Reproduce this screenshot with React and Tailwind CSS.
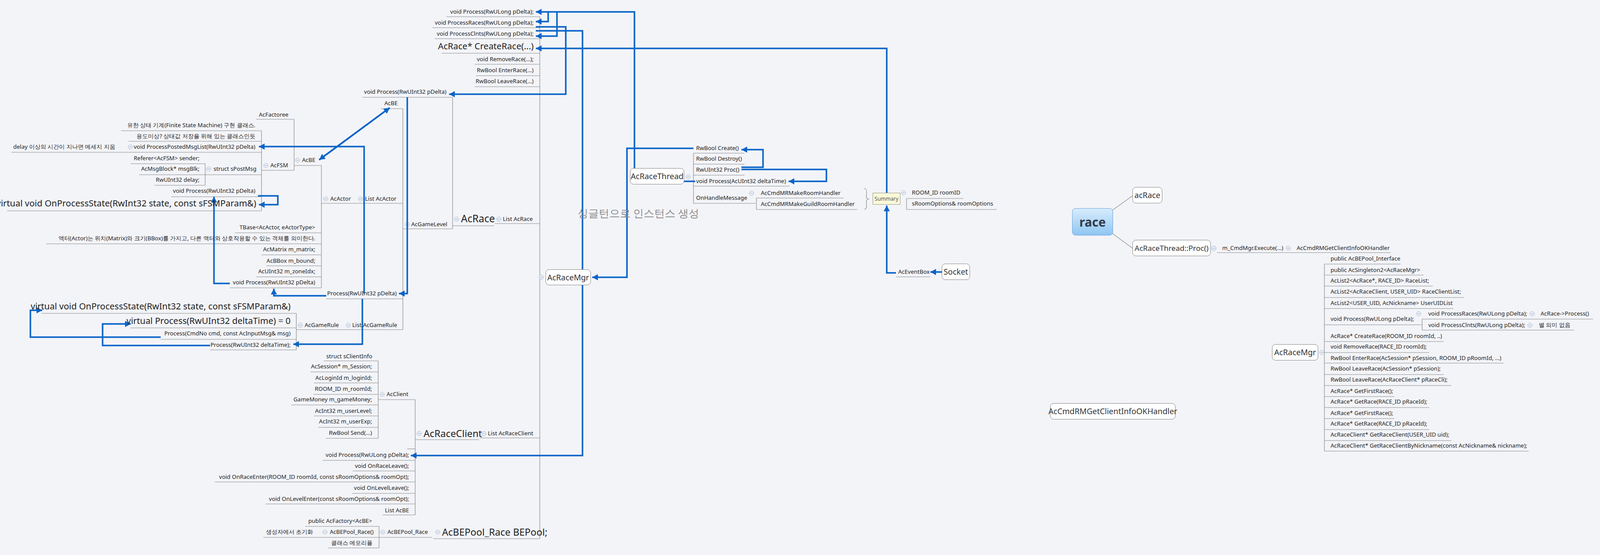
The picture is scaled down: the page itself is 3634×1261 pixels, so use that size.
import React from "react";

const S = 13, L = 20;
// [anchor, x, y(center), text, size, ulY, ulX1, ulX2, minusX]
const items = [
  ["r",1014,209,"void Process(RwUInt32 pDelta)",S,221,823,1028],
  ["l",873,235,"AcBE",S,247,865,915],
  ["l",588,261,"AcFactoree",S,271,582,668],
  ["r",580,285,"유한 상태 기계(Finite State Machine) 구현 클래스.",S,297,275,594],
  ["r",580,310,"용도미상? 상태값 저장을 위해 있는 클래스인듯",S,321,292,594],
  ["l",30,334,"delay 이상의 시간이 지나면 메세지 지움",S,346,26,594],
  ["r",580,334,"void ProcessPostedMsgList(RwUInt32 pDelta)",S,null,0,0,296],
  ["r",453,360,"Referer<AcFSM> sender;",S,372,297,466],
  ["r",453,384,"AcMsgBlock* msgBlk;",S,397,316,594],
  ["l",485,384,"struct sPostMsg",S,null,0,0,474],
  ["r",453,409,"RwUInt32 delay;",S,421,351,466],
  ["r",580,434,"void Process(RwUInt32 pDelta)",S,447,389,594],
  ["r",582,463,"virtual void OnProcessState(RwInt32 state, const sFSMParam&)",L,479,16,594],
  ["l",614,376,"AcFSM",S,387,594,668,604],
  ["l",686,364,"AcBE",S,376,668,730,676],
  ["l",750,452,"AcActor",S,462,730,805,740],
  ["l",829,452,"List AcActor",S,462,805,915,819],
  ["r",716,517,"TBase<AcActor, eActorType>",S,529,534,730],
  ["r",716,542,"액터(Actor)는 위치(Matrix)와 크기(BBox)를 가지고, 다른 액터와 상호작용할 수 있는 객체를 의미한다.",S,554,105,730],
  ["r",716,567,"AcMatrix m_matrix;",S,579,594,730],
  ["r",716,593,"AcBBox m_bound;",S,604,605,730],
  ["r",716,617,"AcUInt32 m_zoneIdx;",S,629,582,730],
  ["r",716,642,"void Process(RwUInt32 pDelta)",S,654,522,730],
  ["r",901,667,"Process(RwUInt32 pDelta)",S,679,741,915],
  ["l",934,510,"AcGameLevel",S,520,915,1028,925],
  ["l",1047,498,"AcRace",L+3,513,1028,1122,1037],
  ["l",1142,498,"List AcRace",S,508,1124,1226,1133],
  ["r",660,697,"virtual void OnProcessState(RwInt32 state, const sFSMParam&)",L,712,94,673],
  ["r",660,730,"virtual Process(RwUInt32 deltaTime) = 0",L,745,296,673],
  ["l",692,739,"AcGameRule",S,749,673,790,682],
  ["l",800,739,"List AcGameRule",S,749,790,915,791],
  ["r",660,758,"Process(CmdNo cmd, const AcInputMsg& msg)",S,771,365,673],
  ["r",660,784,"Process(RwUInt32 deltaTime);",S,795,477,673],
  ["l",741,810,"struct sClientInfo",S,820,735,859],
  ["r",845,833,"AcSession* m_Session;",S,845,705,859],
  ["r",845,859,"AcLoginId m_loginId;",S,870,713,859],
  ["r",845,884,"ROOM_ID m_roomId;",S,896,712,859],
  ["r",845,908,"GameMoney m_gameMoney;",S,920,662,859],
  ["r",845,934,"AcInt32 m_userLevel;",S,945,713,859],
  ["r",845,958,"AcInt32 m_userExp;",S,971,723,859],
  ["r",845,984,"RwBool Send(...)",S,996,740,859],
  ["l",878,896,"AcClient",S,908,859,943,868],
  ["l",962,985,"AcRaceClient",L+2,999,943,1088,952],
  ["l",1108,985,"List AcRaceClient",S,995,1090,1226,1099],
  ["r",929,1034,"void Process(RwULong pDelta);",S,1046,733,943],
  ["r",929,1059,"void OnRaceLeave();",S,1070,801,943],
  ["r",929,1084,"void OnRaceEnter(ROOM_ID roomId, const sRoomOptions& roomOpt);",S,1095,488,943],
  ["r",929,1109,"void OnLevelLeave();",S,1121,800,943],
  ["r",929,1134,"void OnLevelEnter(const sRoomOptions& roomOpt);",S,1145,603,943],
  ["r",929,1160,"List AcBE",S,1170,869,943],
  ["r",845,1184,"public AcFactory<AcBE>",S,1196,693,861],
  ["l",604,1209,"생성자에서 초기화",S,1221,598,861],
  ["l",749,1209,"AcBEPool_Race()",S,null,0,0,738],
  ["r",846,1234,"클래스 메모리풀",S,1245,745,861],
  ["l",880,1209,"AcBEPool_Race",S,1221,861,982,869],
  ["l",1004,1209,"AcBEPool_Race BEPool;",L+2,1224,984,1226,994],
  ["r",1212,27,"void Process(RwULong pDelta);",S,38,1014,1226],
  ["r",1212,52,"void ProcessRaces(RwULong pDelta);",S,63,982,1226],
  ["r",1212,77,"void ProcessClnts(RwULong pDelta);",S,88,987,1226],
  ["r",1212,106,"AcRace* CreateRace(...)",L,121,1003,1226],
  ["r",1212,135,"void RemoveRace(...);",S,146,1078,1226],
  ["r",1212,160,"RwBool EnterRace(...)",S,172,1081,1226],
  ["r",1212,185,"RwBool LeaveRace(...)",S,197,1078,1226],
  ["l",1581,337,"RwBool Create()",S,348,1575,1691],
  ["l",1581,361,"RwBool Destroy()",S,373,1575,1691],
  ["l",1581,386,"RwUInt32 Proc()",S,398,1575,1691],
  ["l",1581,412,"void Process(AcUInt32 deltaTime)",S,423,1575,1793],
  ["l",1581,450,"OnHandleMessage",S,462,1575,1716],
  ["l",1728,439,"AcCmdMRMakeRoomHandler",S,450,1718,1916,1707],
  ["l",1728,464,"AcCmdMRMakeGuildRoomHandler",S,476,1718,1947],
  ["l",2071,438,"ROOM_ID roomID",S,451,2059,2188,2052],
  ["l",2071,463,"sRoomOptions& roomOptions",S,476,2059,2264],
  ["l",2040,618,"AcEventBox",S,629,2035,2113],
  ["l",2776,564,"m_CmdMgr.Execute(...)",S,574,2764,3159,2757],
  ["l",2945,564,"AcCmdRMGetClientInfoOKHandler",S,null,0,0,2926],
  ["l",3244,713,"void ProcessRaces(RwULong pDelta);",S,725,3230,3618,3222],
  ["l",3499,713,"AcRace->Process()",S,null,0,0,3480],
  ["l",3244,739,"void ProcessClnts(RwULong pDelta);",S,750,3230,3575],
  ["l",3495,739,"별 의미 없음",S,null,0,0,3475],
];
const mgr = [
  ["public AcBEPool_Interface",588,600,3181],
  ["public AcSingleton2<AcRaceMgr>",614,625,3233],
  ["AcList2<AcRace*, RACE_ID> RaceList;",638,650,3254],
  ["AcList2<AcRaceClient, USER_UID> RaceClientList;",663,676,3325],
  ["AcList2<USER_UID, AcNickname> UserUIDList",689,701,3301],
  ["void Process(RwULong pDelta);",725,738,3230],
  ["AcRace* CreateRace(ROOM_ID roomId, ..)",764,776,3279],
  ["void RemoveRace(RACE_ID roomId);",788,801,3246],
  ["RwBool  EnterRace(AcSession* pSession, ROOM_ID pRoomId, ...)",814,825,3415],
  ["RwBool  LeaveRace(AcSession* pSession);",838,851,3279],
  ["RwBool  LeaveRace(AcRaceClient* pRaceCli);",863,876,3296],
  ["AcRace* GetFirstRace();",889,901,3167],
  ["AcRace* GetRace(RACE_ID pRaceId);",913,926,3246],
  ["AcRace* GetFirstRace();",939,951,3167],
  ["AcRace* GetRace(RACE_ID pRaceId);",963,976,3246],
  ["AcRaceClient* GetRaceClient(USER_UID uid);",988,1001,3296],
  ["AcRaceClient* GetRaceClientByNickname(const AcNickname& nickname);",1013,1025,3472],
];
mgr.forEach(([t,y,u,r]) => items.push(["l",3022,y,t,S,u,3008,r]));

const verticals = [
  [1028,221,520],[915,247,749],[668,271,387],[594,297,479],[466,372,421],[730,376,654],
  [673,712,795],[859,820,996],[943,908,1170],[861,1196,1245],[1226,38,1224],
  [1575,348,462],[1718,450,476],[2059,451,476],[3008,600,1025],[3230,725,750],
];
const extra = [[925,1020,943,1020]];

const arrows = [
  [[1579,412],[1441,412],[1441,27],[1217,27]],
  [[1245,27],[1245,49],[1217,49]],
  [[1265,27],[1265,82],[1217,82]],
  [[1217,61],[1285,61],[1285,214],[1020,214]],
  [[1217,70],[1323,70],[1323,1035],[933,1035]],
  [[2014,438],[2014,110],[1217,110]],
  [[2035,620],[2014,620],[2014,467]],
  [[2139,618],[2113,618]],
  [[1575,337],[1424,337],[1424,630],[1345,630]],
  [[1684,380],[1733,380],[1733,340],[1684,340]],
  [[1684,385],[1877,385],[1877,412],[1791,412]],
  [[885,245],[725,363]],
  [[725,363],[885,245]],
  [[827,667],[827,333],[588,333]],
  [[925,221],[925,667],[906,667]],
  [[586,445],[631,445],[631,465],[588,465]],
  [[522,644],[486,644],[486,447]],
  [[741,672],[622,672],[622,656]],
  [[823,679],[823,782],[666,782]],
  [[365,766],[69,766],[69,705],[96,705]],
  [[477,785],[233,785],[233,736],[297,736]],
];

function head(pts) {
  const [x1, y1] = pts[pts.length - 2], [x2, y2] = pts[pts.length - 1];
  const a = Math.atan2(y2 - y1, x2 - x1), l = 13, w = 7;
  const bx = x2 - l * Math.cos(a), by = y2 - l * Math.sin(a);
  const px = -Math.sin(a) * w, py = Math.cos(a) * w;
  return `${x2},${y2} ${bx + px},${by + py} ${bx - px},${by - py}`;
}

function Minus({ x, y }) {
  return (
    <g>
      <circle cx={x} cy={y} r="5" fill="#eef2f8" stroke="#a9b9d0" strokeWidth="1" />
      <line x1={x - 3} y1={y} x2={x + 3} y2={y} stroke="#8aa0c0" strokeWidth="1" />
    </g>
  );
}

function Box({ x, y, w, h, text, size = "text-[18px]" }) {
  return (
    <div className={`absolute flex items-center justify-center whitespace-nowrap rounded-lg border border-[#8a8a8a] bg-white text-[#333] ${size}`}
      style={{ left: x, top: y, width: w, height: h }}>{text}</div>
  );
}

export default function App() {
  return (
    <div className="relative h-[1261px] w-[3634px] overflow-hidden bg-[#f3f4f8] font-['Roboto','Noto_Sans_CJK_KR',sans-serif]">
      <svg className="absolute left-0 top-0" width="3634" height="1261">
        <g stroke="#8d8d8d" strokeWidth="1.2" fill="none">
          {items.filter(i => i[5] != null).map((i, k) => (
            <line key={k} x1={i[6]} y1={i[5]} x2={i[7]} y2={i[5]} />
          ))}
          {verticals.map(([x, a, b], k) => <line key={"v" + k} x1={x} y1={a} x2={x} y2={b} />)}
          {extra.map(([a, b, c, d], k) => <line key={"e" + k} x1={a} y1={b} x2={c} y2={d} />)}
          <line x1="2526" y1="478" x2="2572" y2="445" />
          <line x1="2526" y1="530" x2="2572" y2="564" />
          <path d="M1963 428 Q1970 430 1968 442 Q1966 452 1974 452 Q1966 452 1968 462 Q1970 474 1963 476" />
        </g>
        {items.filter(i => i[8]).map((i, k) => <Minus key={"m" + k} x={i[8]} y={i[2]} />)}
        {[[1229,630],[1563,402],[3002,801],[2757,564]].map(([x, y], k) => <Minus key={"n" + k} x={x} y={y} />)}
        <g>
          {arrows.map((p, k) => (
            <g key={"a" + k}>
              <polyline points={p.map(q => q.join(",")).join(" ")} fill="none" stroke="#0a64c8" strokeWidth="3.5" />
              <polygon points={head(p)} fill="#0a64c8" />
            </g>
          ))}
        </g>
      </svg>
      {items.filter(i => i[3]).map((i, k) => (
        <div key={k} className="absolute whitespace-nowrap leading-none text-[#222]"
          style={{ fontSize: i[4], top: i[2] - i[4] * 0.55, ...(i[0] === "r" ? { right: 3634 - i[1] } : { left: i[1] }) }}>
          {i[3]}
        </div>
      ))}
      <div className="absolute left-[1312px] top-[472px] whitespace-nowrap text-[24px] leading-none text-[#8a8a8a]">싱글턴으로 인스턴스 생성</div>
      <Box x={1239} y={612} w={103} h={36} text="AcRaceMgr" />
      <Box x={1431} y={382} w={123} h={37} text="AcRaceThread" />
      <Box x={2139} y={599} w={64} h={37} text="Socket" />
      <div className="absolute left-[1982px] top-[438px] flex h-[27px] w-[63px] items-center justify-center border border-[#9a9a8a] bg-[#fafad8] text-[12px] text-[#555]">Summary</div>
      <div className="absolute left-[2435px] top-[473px] flex h-[62px] w-[93px] items-center justify-center rounded-lg border border-[#6ea8dd] bg-gradient-to-b from-[#d8ecfc] to-[#8fc6f2] text-[28px] font-bold text-[#333c4a]">race</div>
      <Box x={2572} y={425} w={68} h={37} text="acRace" />
      <Box x={2572} y={545} w={178} h={37} text="AcRaceThread::Proc()" size="text-[17px]" />
      <Box x={2889} y={782} w={105} h={37} text="AcRaceMgr" />
      <Box x={2385} y={916} w={285} h={37} text="AcCmdRMGetClientInfoOKHandler" />
    </div>
  );
}
